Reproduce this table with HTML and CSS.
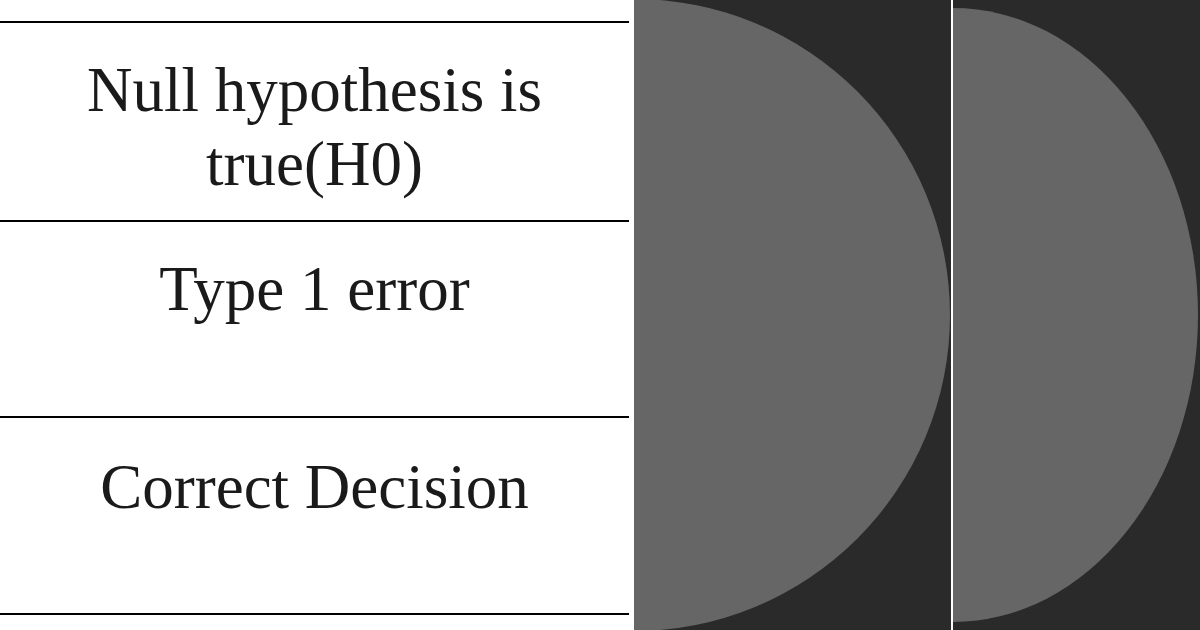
FILE: index.html
```html
<!DOCTYPE html>
<html lang="en">
<head>
    <meta charset="UTF-8">
    <meta name="viewport" content="width=device-width, initial-scale=1.0">
    <title>Type 1 error</title>
    <link rel="stylesheet" href="styles.css">
</head>
<body>
    <div class="page">
        <div class="table">
            <div class="row row-head">Null hypothesis is true(H0)</div>
            <div class="row row-mid">Type 1 error</div>
            <div class="row row-last">Correct Decision</div>
        </div>

        <div class="panel panel-wide">
            <div class="half-circle"></div>
        </div>
        <div class="panel panel-narrow">
            <div class="half-ellipse"></div>
        </div>
    </div>
</body>
</html>
```

FILE: styles.css
```css
body {
    margin: 0;
    background-color: #fff;
    font-family: "Liberation Serif", "Times New Roman", serif;
}

.page {
    display: flex;
    width: 1200px;
    height: 630px;
    overflow: hidden;
}

.table {
    width: 629px;
    margin-right: 5px;
    padding-top: 21px;
    flex-shrink: 0;
}

.row {
    border-top: 2px solid #000;
    padding: 30px 10px 0;
    box-sizing: border-box;
    text-align: center;
    font-size: 63px;
    line-height: 74px;
    color: #1a1a1a;
}

.row-head {
    height: 199px; /* ขอบบนรวมด้วย */
}

.row-mid {
    height: 196px;
}

.row-last {
    height: 199px;
    padding-top: 32px;
    border-bottom: 2px solid #000;
}

.panel {
    height: 630px;
    background-color: #2a2a2a;
    flex-shrink: 0;
    display: flex;
    align-items: center;
    overflow: hidden;
}

.panel-wide {
    width: 317px;
    margin-right: 2px;
}

.panel-narrow {
    width: 247px;
}

.half-circle {
    width: 316px;
    height: 632px;
    flex-shrink: 0;
    background-color: #666;
    border-radius: 0 316px 316px 0;
}

.half-ellipse {
    width: 245px;
    height: 614px;
    flex-shrink: 0;
    background-color: #666;
    border-radius: 0 245px 245px 0 / 0 307px 307px 0;
}
```
